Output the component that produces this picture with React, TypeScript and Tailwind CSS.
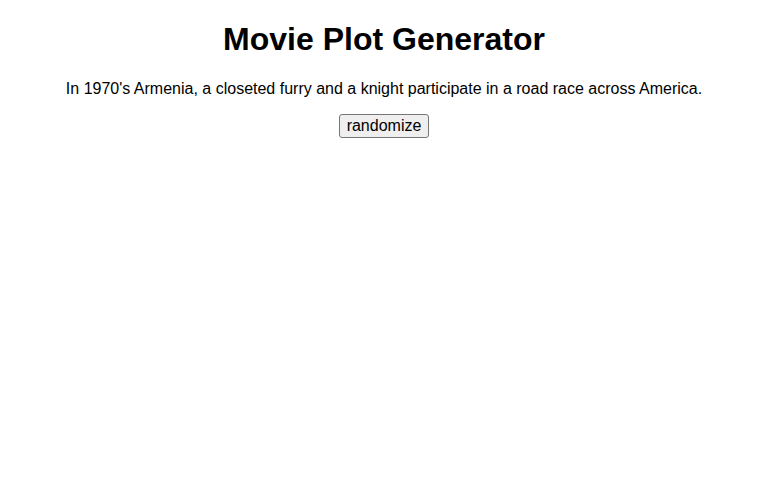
export default function App() {
  const plot =
    "In 1970's Armenia, a closeted furry and a knight participate in a road race across America."

  return (
    <div className="min-h-screen bg-white text-black text-center font-['Liberation_Sans',Arial,sans-serif]">
      <h1 className="pt-[21.44px] mb-[21.44px] text-[32px] font-bold leading-[1.15]">Movie Plot Generator</h1>
      <p className="mb-4 text-base leading-[1.15]">{plot}</p>
      <button className="rounded-[3px] border border-[#767676] bg-[#efefef] px-[7px] py-[2px] text-base leading-[1.15] text-black">
        randomize
      </button>
    </div>
  )
}
